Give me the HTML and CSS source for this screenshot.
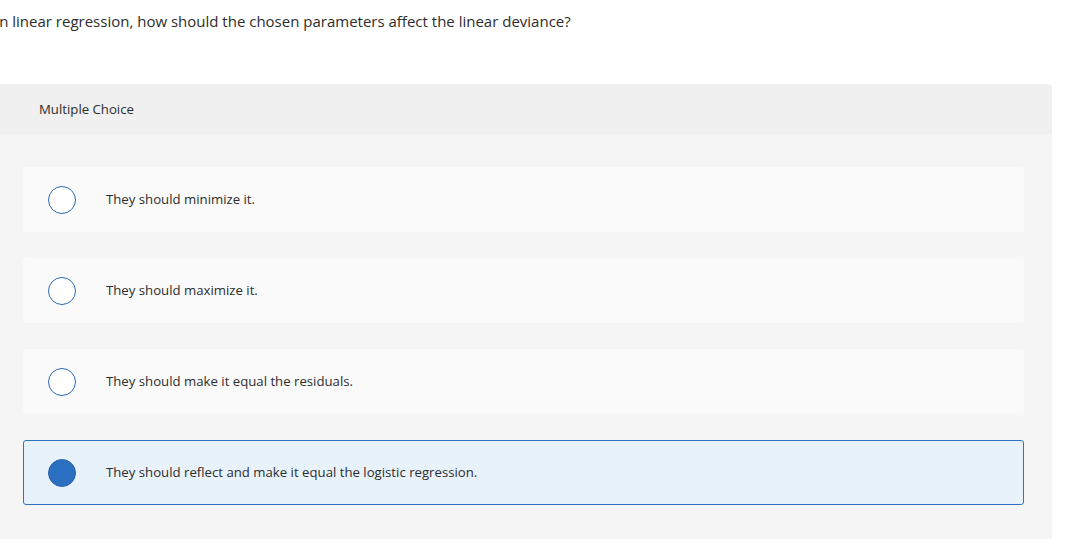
FILE: index.html
```html
<!DOCTYPE html>
<html>
<head>
<meta charset="utf-8">
<link rel="stylesheet" href="styles.css">
</head>
<body>
<div class="page">
  <p class="question">In linear regression, how should the chosen parameters affect the linear deviance?</p>
  <section class="panel">
    <div class="panel-head">Multiple Choice</div>
    <div class="panel-body">
      <label class="option"><span class="radio"></span><span class="label">They should minimize it.</span></label>
      <label class="option"><span class="radio"></span><span class="label">They should maximize it.</span></label>
      <label class="option"><span class="radio"></span><span class="label">They should make it equal the residuals.</span></label>
      <label class="option selected"><span class="radio"></span><span class="label">They should reflect and make it equal the logistic regression.</span></label>
    </div>
  </section>
</div>
</body>
</html>
```
FILE: styles.css
```css
html, body {
  margin: 0;
  padding: 0;
  background: #ffffff;
}
body {
  font-family: "Open Sans", "Liberation Sans", sans-serif;
  color: #333333;
  width: 1092px;
  height: 552px;
  overflow: hidden;
}
.page {
  width: 1052px;
}
.question {
  margin: 0 0 0 -5px;
  padding-top: 11px;
  height: 84px;
  box-sizing: border-box;
  font-size: 15px;
  line-height: 20px;
  color: #2d2d2d;
  white-space: nowrap;
}
.panel {
  width: 1052px;
  border-top-right-radius: 4px;
  overflow: hidden;
}
.panel-head {
  background: #f0f0f0;
  height: 50px;
  display: flex;
  align-items: center;
  padding-left: 39px;
  font-size: 13.2px;
  color: #2d2d2d;
}
.panel-body {
  background: #f5f5f5;
  padding: 33px 28px 34px 23px;
  display: flex;
  flex-direction: column;
  gap: 26px;
}
.option {
  height: 65px;
  box-sizing: border-box;
  background: #fafafa;
  border: 1px solid #fafafa;
  border-radius: 3px;
  display: flex;
  align-items: center;
  padding-left: 24px;
  font-size: 13.2px;
  color: #2d2d2d;
}
.radio {
  width: 28px;
  height: 28px;
  box-sizing: border-box;
  border-radius: 50%;
  border: 1.5px solid #2c6cb4;
  background: #ffffff;
  flex: none;
}
.label {
  margin-left: 30px;
  line-height: 18px;
  padding-bottom: 2px;
}
.option.selected {
  background: #e8f2fb;
  border-color: #2f72c4;
}
.option.selected .radio {
  background: #2b6fc0;
  border-color: #2a66ad;
}
```
